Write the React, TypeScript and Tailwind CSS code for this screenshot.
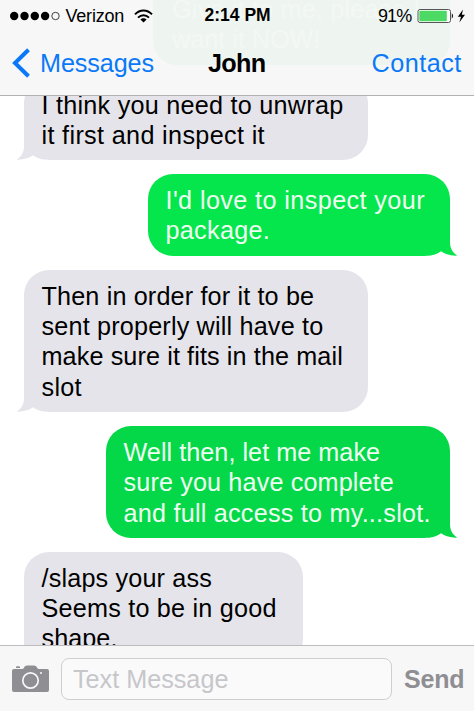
import React from "react";

type Line = { text: string; spacing: string };
type Message = { from: "them" | "me"; box: string; fill: string; lines: Line[] };

const messages: Message[] = [
  {
    from: "them",
    box: "w-[344px] bg-[#e5e4ea] text-black",
    fill: "#e5e4ea",
    lines: [
      { text: "I think you need to unwrap", spacing: "tracking-[0.25px]" },
      { text: "it first and inspect it", spacing: "tracking-[0.34px]" },
    ],
  },
  {
    from: "me",
    box: "w-[302px] bg-[#04e64c] text-[#effff2]",
    fill: "#04e64c",
    lines: [
      { text: "I'd love to inspect your", spacing: "tracking-[0.4px]" },
      { text: "package.", spacing: "tracking-[0.3px]" },
    ],
  },
  {
    from: "them",
    box: "w-[344px] bg-[#e5e4ea] text-black",
    fill: "#e5e4ea",
    lines: [
      { text: "Then in order for it to be", spacing: "tracking-[0.15px]" },
      { text: "sent properly will have to", spacing: "tracking-[0.18px]" },
      { text: "make sure it fits in the mail", spacing: "tracking-[0.11px]" },
      { text: "slot", spacing: "tracking-[0.3px]" },
    ],
  },
  {
    from: "me",
    box: "w-[344px] bg-[#04d848] text-[#effff2]",
    fill: "#04d848",
    lines: [
      { text: "Well then, let me make", spacing: "tracking-[0.04px]" },
      { text: "sure you have complete", spacing: "tracking-[0.14px]" },
      { text: "and full access to my...slot.", spacing: "tracking-[0.23px]" },
    ],
  },
  {
    from: "them",
    box: "w-[279px] bg-[#e5e4ea] text-black",
    fill: "#e5e4ea",
    lines: [
      { text: "/slaps your ass", spacing: "tracking-[0.17px]" },
      { text: "Seems to be in good", spacing: "tracking-[0.22px]" },
      { text: "shape.", spacing: "tracking-[0.05px]" },
    ],
  },
];

function Tail({ side, color }: { side: "left" | "right"; color: string }) {
  return (
    <svg
      className={`absolute bottom-0 h-[26px] w-[34px] ${side === "left" ? "-left-2" : "-right-2 -scale-x-100"}`}
      viewBox="0 0 34 26"
    >
      <path d="M8 0H34V26H0Z" fill="#fff" />
      <path d="M8 0V12C8 18.5 5.5 22.5 0.6 25.6C6 26 12.5 24.5 17 21.3C21 24.3 26 26 34 26V0Z" fill={color} />
    </svg>
  );
}

function Bubble({ message }: { message: Message }) {
  const mine = message.from === "me";
  return (
    <div
      className={`relative shrink-0 rounded-[25px] pt-[11.5px] pb-[10px] pl-[17.5px] text-[25.2px] leading-[30.1px] ${message.box} ${mine ? "self-end" : "self-start"}`}
    >
      <Tail side={mine ? "right" : "left"} color={message.fill} />
      {message.lines.map((line) => (
        <div key={line.text} className={`relative whitespace-nowrap ${line.spacing}`}>
          {line.text}
        </div>
      ))}
    </div>
  );
}

function StatusBar() {
  return (
    <div className="flex h-[31px] items-center pl-[9.5px] text-[18px] leading-none">
      <svg className="h-[10px] w-[50px]" viewBox="0 0 50 10">
        {[4.2, 14.5, 24.8, 35.1].map((x) => (
          <circle key={x} cx={x} cy="5" r="4.2" />
        ))}
        <circle cx="45.5" cy="5" r="3.7" fill="none" stroke="#111" strokeWidth="0.8" />
      </svg>
      <span className="ml-[6px] w-[60px] whitespace-nowrap tracking-[-0.2px]">Verizon</span>
      <svg className="ml-[8px] h-[14px] w-[19px]" viewBox="0 0 19 14" fill="none" stroke="#000" strokeWidth="2">
        <path d="M1 5.3C5.7 .1 13.3 .1 18 5.3M4 8.6C7.2 5.3 11.8 5.3 15 8.6" />
        <path d="M6.4 10.6C8.1 8.8 10.9 8.8 12.6 10.6L9.5 13.6Z" fill="#000" stroke="none" />
      </svg>
      <span className="ml-[52px] w-[70px] whitespace-nowrap text-[17.5px] font-bold">2:14 PM</span>
      <span className="ml-[103.5px] w-[36px] whitespace-nowrap tracking-[-0.9px]">91%</span>
      <svg className="ml-[2.5px] h-[16px] w-[50px]" viewBox="0 0 50 16">
        <rect x="1" y="1.5" width="32.5" height="13" rx="2" fill="#fff" stroke="#555" strokeWidth="1" />
        <rect x="2.3" y="2.8" width="27.5" height="10.4" rx="1" fill="#4cd964" />
        <path d="M34.8 5.3Q37.2 8 34.8 10.7Z" />
        <path d="M46 1.5L40.8 8.7H44L42.3 14.5L48 6.8H44.8Z" />
      </svg>
    </div>
  );
}

export default function App() {
  return (
    <div className="flex h-[711px] w-[474px] flex-col overflow-hidden bg-white font-['Liberation_Sans',Arial,sans-serif]">
      <header className="relative z-10 h-[95.5px] shrink-0 border-b border-[#b2b2b4] bg-[#f7f7f7]">
        {/* A sent message shows faintly through the translucent bar. */}
        <div className="absolute top-0 left-[153px] h-[65px] w-[297px] overflow-hidden rounded-b-[24px] bg-[#eef5f0] pl-[19px] text-[25.2px] leading-[30px] text-[#f3f8f4]">
          <div className="-mt-[6px] tracking-[0.2px] whitespace-nowrap">Give it to me, please I</div>
          <div className="whitespace-nowrap">want it NOW!</div>
        </div>
        <div className="relative">
          <StatusBar />
          <nav className="flex h-[64px] items-center text-[25.2px] leading-[64px]">
            <svg className="ml-[12px] h-[30px] w-[18px]" viewBox="0 0 18 30" fill="none" stroke="#0b79f7" strokeWidth="4">
              <path d="M16.5 1.8L3 15L16.5 28.2" />
            </svg>
            <span className="ml-[10px] w-[168px] tracking-[-0.1px] whitespace-nowrap text-[#0b79f7]">Messages</span>
            <span className="w-[163.5px] tracking-[-0.7px] font-bold">John</span>
            <span className="tracking-[0.5px] whitespace-nowrap text-[#0b79f7]">Contact</span>
          </nav>
        </div>
      </header>
      <main className="-mt-[17.5px] flex min-h-0 flex-1 flex-col gap-[14.2px] overflow-hidden px-6">
        {messages.map((m) => (
          <Bubble key={m.lines[0].text} message={m} />
        ))}
      </main>
      <footer className="relative flex h-[66px] shrink-0 items-center border-t border-[#bcbcbf] bg-[#f7f7f7] pl-[12px]">
        <svg className="h-[28px] w-[37px]" viewBox="0 0 37 28">
          <path
            d="M4 2.3Q4 1.3 5 1.3H7Q8 1.3 8 2.3V3H4ZM2 4H10Q11.5 4 12 2.5Q13 .5 15 .5H22Q24 .5 25 2.5Q25.7 4 27 4H35Q37 4 37 6V25Q37 27 35 27H2Q0 27 0 25V6Q0 4 2 4Z"
            fill="#8e8e93"
          />
          <circle cx="18.5" cy="15.5" r="7.7" fill="none" stroke="#f7f7f7" strokeWidth="1.7" />
          <circle cx="29" cy="8" r="1" fill="#f7f7f7" />
        </svg>
        <div className="ml-[12px] h-[42px] w-[331px] rounded-[8px] border border-[#cfcfd2] bg-[#fafafa] pl-[11px] text-[25.2px] leading-[40px] whitespace-nowrap text-[#c6c6cb]">
          Text Message
        </div>
        <span className="ml-[12px] pt-[2px] text-[25px] tracking-[-0.2px] font-bold text-[#8e8e93]">Send</span>
      </footer>
    </div>
  );
}
